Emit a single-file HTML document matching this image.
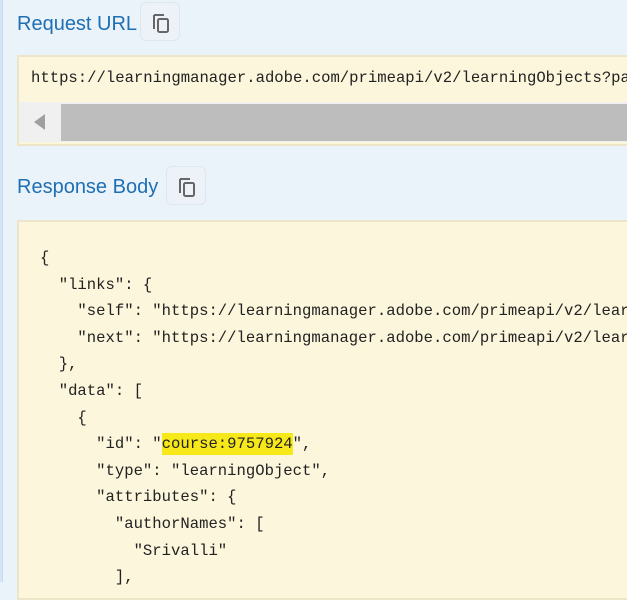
<!DOCTYPE html>
<html><head><meta charset="utf-8"><style>
*{margin:0;padding:0;box-sizing:border-box}
body{width:627px;height:582px;overflow:hidden;background:#eaf2fa;position:relative;font-family:"Liberation Sans",sans-serif}
.lb{position:absolute;left:0;top:0;width:3px;height:582px;background:#d6e5f5;border-right:1px solid #c5d9ee}
.h{position:absolute;left:17px;color:#1f6fb3;font-size:20px}
.btn{position:absolute;width:40px;height:39px;border:1px solid #dfe6ee;border-radius:6px;background:#edf2f8}
.btn svg{position:absolute;left:11px;top:9px}
.box{position:absolute;left:17px;right:-5px;background:#fcf6dc;border:2px solid #ece5c7;border-right:none}
.mono{font-family:"Liberation Mono",monospace;font-size:15.6px;color:#222;white-space:pre}
.hl{background:#f7e81a;padding:2px 0}
</style></head><body>
<div class="lb"></div>
<div class="h" style="top:13px">Request URL</div>
<div class="btn" style="left:140px;top:2px"><svg width="18" height="22" viewBox="0 0 18 22"><path d="M2 3v14M2 3h10" stroke="#666" stroke-width="2" fill="none"/><rect x="6" y="7" width="10" height="13" rx="1.5" stroke="#666" stroke-width="2" fill="none"/></svg></div>
<div class="box" style="top:55px;height:91px">
<div class="mono" style="position:absolute;left:12px;top:12px">https://learningmanager.adobe.com/primeapi/v2/learningObjects?pa</div>
<div style="position:absolute;left:0;top:45px;right:0;height:40px;background:#f0f0f0"></div>
<div style="position:absolute;left:15px;top:57px;width:0;height:0;border-top:8px solid transparent;border-bottom:8px solid transparent;border-right:11px solid #a0a0a0"></div>
<div style="position:absolute;left:42px;top:47px;right:0;height:37px;background:#bdbdbd"></div>
</div>
<div class="h" style="top:176px">Response Body</div>
<div class="btn" style="left:166px;top:166px"><svg width="18" height="22" viewBox="0 0 18 22"><path d="M2 3v14M2 3h10" stroke="#666" stroke-width="2" fill="none"/><rect x="6" y="7" width="10" height="13" rx="1.5" stroke="#666" stroke-width="2" fill="none"/></svg></div>
<div class="box" style="top:220px;height:380px">
<div class="mono" style="position:absolute;left:21px;top:23px;line-height:26.6px">{
  "links": {
    "self": "https://learningmanager.adobe.com/primeapi/v2/lear
    "next": "https://learningmanager.adobe.com/primeapi/v2/lear
  },
  "data": [
    {
      "id": "<span class="hl">course:9757924</span>",
      "type": "learningObject",
      "attributes": {
        "authorNames": [
          "Srivalli"
        ],</div>
</div>
</body></html>
